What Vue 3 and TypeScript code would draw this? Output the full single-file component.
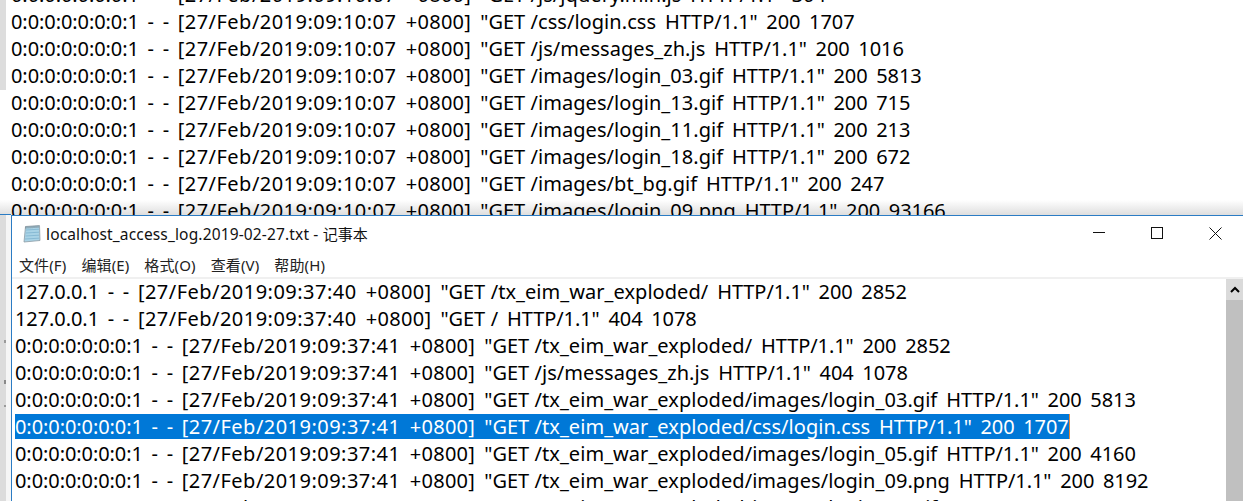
<script setup lang="ts">
const seg = (t: string): string[] => {
  const m = t.match(/^(.*? - - )(\[\S+ )(\+0800\] )("GET )(\S+ )(.*)$/)
  return m ? m.slice(1) : [t]
}
const back: string[] = [
  '0:0:0:0:0:0:0:1 - - [27/Feb/2019:09:10:07 +0800] "GET /js/jquery.min.js HTTP/1.1" 304 -',
  '0:0:0:0:0:0:0:1 - - [27/Feb/2019:09:10:07 +0800] "GET /css/login.css HTTP/1.1" 200 1707',
  '0:0:0:0:0:0:0:1 - - [27/Feb/2019:09:10:07 +0800] "GET /js/messages_zh.js HTTP/1.1" 200 1016',
  '0:0:0:0:0:0:0:1 - - [27/Feb/2019:09:10:07 +0800] "GET /images/login_03.gif HTTP/1.1" 200 5813',
  '0:0:0:0:0:0:0:1 - - [27/Feb/2019:09:10:07 +0800] "GET /images/login_13.gif HTTP/1.1" 200 715',
  '0:0:0:0:0:0:0:1 - - [27/Feb/2019:09:10:07 +0800] "GET /images/login_11.gif HTTP/1.1" 200 213',
  '0:0:0:0:0:0:0:1 - - [27/Feb/2019:09:10:07 +0800] "GET /images/login_18.gif HTTP/1.1" 200 672',
  '0:0:0:0:0:0:0:1 - - [27/Feb/2019:09:10:07 +0800] "GET /images/bt_bg.gif HTTP/1.1" 200 247',
  '0:0:0:0:0:0:0:1 - - [27/Feb/2019:09:10:07 +0800] "GET /images/login_09.png HTTP/1.1" 200 93166',
]
const front: { t: string; sel?: boolean }[] = [
  { t: '127.0.0.1 - - [27/Feb/2019:09:37:40 +0800] "GET /tx_eim_war_exploded/ HTTP/1.1" 200 2852' },
  { t: '127.0.0.1 - - [27/Feb/2019:09:37:40 +0800] "GET / HTTP/1.1" 404 1078' },
  { t: '0:0:0:0:0:0:0:1 - - [27/Feb/2019:09:37:41 +0800] "GET /tx_eim_war_exploded/ HTTP/1.1" 200 2852' },
  { t: '0:0:0:0:0:0:0:1 - - [27/Feb/2019:09:37:41 +0800] "GET /js/messages_zh.js HTTP/1.1" 404 1078' },
  { t: '0:0:0:0:0:0:0:1 - - [27/Feb/2019:09:37:41 +0800] "GET /tx_eim_war_exploded/images/login_03.gif HTTP/1.1" 200 5813' },
  { t: '0:0:0:0:0:0:0:1 - - [27/Feb/2019:09:37:41 +0800] "GET /tx_eim_war_exploded/css/login.css HTTP/1.1" 200 1707', sel: true },
  { t: '0:0:0:0:0:0:0:1 - - [27/Feb/2019:09:37:41 +0800] "GET /tx_eim_war_exploded/images/login_05.gif HTTP/1.1" 200 4160' },
  { t: '0:0:0:0:0:0:0:1 - - [27/Feb/2019:09:37:41 +0800] "GET /tx_eim_war_exploded/images/login_09.png HTTP/1.1" 200 8192' },
  { t: '0:0:0:0:0:0:0:1 - - [27/Feb/2019:09:37:41 +0800] "GET /tx_eim_war_exploded/images/login_13.gif HTTP/1.1" 200 715' },
]
const menus: string[] = ['文件(F)', '编辑(E)', '格式(O)', '查看(V)', '帮助(H)']
</script>

<template>
  <div class="screen">
    <div class="back">
      <div class="back-strip"></div>
      <div class="back-lines">
        <div v-for="(l, i) in back" :key="i" class="line">
          <span v-for="(s, j) in seg(l)" :key="j" :class="'s' + j">{{ s }}</span>
        </div>
      </div>
    </div>
    <div class="under"></div>
    <div class="win">
      <div class="titlebar">
        <svg class="app-icon" width="20" height="20" viewBox="0 0 20 20">
          <path d="M3.5 2.5 L17.5 1.5 L18 16.5 L2 18 Z" fill="#a9d3e6" stroke="#8c9aa3" stroke-width="0.8" />
          <path d="M4 6 L17 5.2 M4 9 L17 8.2 M3.5 12 L17 11.2 M3 15 L17 14.2" stroke="#7fb4cf" stroke-width="0.8" />
          <path d="M4 2.5 L4 4.5 M6 2.4 L6 4.4 M8 2.3 L8 4.3 M10 2.2 L10 4.2 M12 2 L12 4 M14 1.9 L14 3.9 M16 1.8 L16 3.8" stroke="#6d7b84" stroke-width="0.9" />
        </svg>
        <span class="title">localhost_access_log.2019-02-27.txt - <span class="title-cjk">记事本</span></span>
        <div class="controls">
          <svg width="12" height="12" viewBox="0 0 12 12" class="ctl"><path d="M0 5.5H12" stroke="#111" stroke-width="1" /></svg>
          <svg width="12" height="12" viewBox="0 0 12 12" class="ctl"><rect x="0.5" y="0.5" width="11" height="11" fill="none" stroke="#111" /></svg>
          <svg width="13" height="13" viewBox="0 0 13 13" class="ctl"><path d="M0.5 0.5L12.5 12.5M12.5 0.5L0.5 12.5" stroke="#111" stroke-width="1" /></svg>
        </div>
      </div>
      <div class="menubar">
        <span v-for="m in menus" :key="m" class="menu">{{ m }}</span>
      </div>
      <div class="editor">
        <div class="lines">
          <div v-for="(l, i) in front" :key="i" class="line">
            <span :class="{ sel: l.sel }"><span v-for="(s, j) in seg(l.t)" :key="j" :class="'s' + j">{{ s }}</span></span>
          </div>
        </div>
        <div class="scrollbar">
          <div class="arrow">
            <svg width="10" height="7" viewBox="0 0 10 7"><path d="M1 6L5 2L9 6" fill="none" stroke="#000" stroke-width="2" /></svg>
          </div>
          <div class="thumb"></div>
        </div>
      </div>
    </div>
  </div>
</template>

<style>
html, body { margin: 0; background: #fff; }
</style>

<style scoped>
.screen {
  position: relative;
  width: 1243px;
  height: 501px;
  overflow: hidden;
  background: #fff;
  font-family: "Noto Sans", "Noto Sans CJK SC", sans-serif;
  color: #000;
}
.back {
  display: flex;
  height: 215px;
  overflow: hidden;
  background: linear-gradient(#fff 200px, #dedede 215px);
}
.under {
  width: 11px;
  height: 286px;
  border-top: 1px solid #2b7cc4;
  margin-top: -1px;
  background:
    linear-gradient(#9a9a9a, #9a9a9a) 4px 125px / 2px 3px no-repeat,
    linear-gradient(#8a8a8a, #8a8a8a) 4px 165px / 2px 4px no-repeat,
    linear-gradient(#9a9a9a, #9a9a9a) 4px 190px / 2px 2px no-repeat,
    linear-gradient(90deg, #dcdcdc 0 6px, #f6f6f6 6px);
}
.back-strip {
  width: 6px;
  flex: none;
  background: #dddddd;
  height: 90px;
}
.back-lines {
  padding-left: 5px;
  margin-top: -18px;
}
.line {
  height: 27px;
  line-height: 25px;
  font-size: 20px;
  letter-spacing: -0.08px;
  word-spacing: 3.6px;
  white-space: pre;
}
.s1 { letter-spacing: 0.47px; }
.s2 { letter-spacing: 0.3px; }
.s3 { word-spacing: 0.4px; }
.s4 { letter-spacing: 0.05px; }
.win {
  position: absolute;
  left: 11px;
  top: 215px;
  right: 0;
  bottom: 0;
  border-top: 1px solid #2b7cc4;
  border-left: 1px solid #2b7cc4;
  background: #fff;
  display: flex;
  flex-direction: column;
}
.titlebar {
  height: 35px;
  padding-bottom: 1px;
  display: flex;
  align-items: center;
  padding-left: 10px;
  flex: none;
}
.app-icon { flex: none; margin-right: 4px; }
.title { font-size: 15.5px; letter-spacing: 0.15px; color: #111; }
.title-cjk { font-size: 15px; letter-spacing: 0; }
.controls {
  margin-left: auto;
  display: flex;
  align-items: center;
  gap: 46px;
  padding-right: 21px;
  margin-bottom: 1px;
}
.ctl { display: block; }
.menubar {
  height: 24px;
  padding-bottom: 1px;
  display: flex;
  align-items: center;
  gap: 15px;
  padding-left: 7px;
  flex: none;
}
.menu { font-size: 15px; letter-spacing: 0.12px; color: #222; }
.editor {
  flex: 1;
  display: flex;
  border-top: 2px solid #f0f0f0;
  min-height: 0;
}
.lines {
  flex: 1;
  padding-left: 3px;
  overflow: hidden;
}
.sel {
  background: #0078d7;
  color: #fff;
  display: inline-block;
  border-right: 1px solid #e8893a;
}
.scrollbar {
  width: 17px;
  flex: none;
  display: flex;
  flex-direction: column;
}
.arrow {
  height: 21px;
  background: #dadada;
  display: flex;
  align-items: center;
  justify-content: center;
}
.thumb { flex: 1; background: #c0c0c0; }
</style>
